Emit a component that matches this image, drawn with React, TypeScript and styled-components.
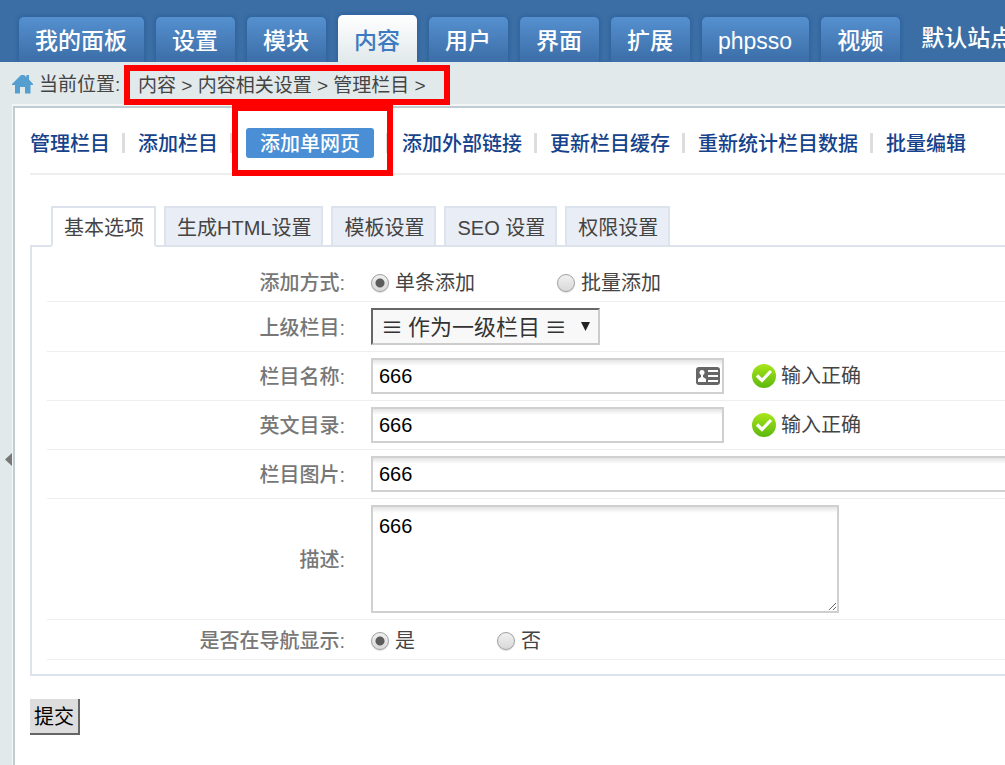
import React from 'react';
import styled, { createGlobalStyle, css } from 'styled-components';

const GlobalStyle = createGlobalStyle`
  *, *::before, *::after { box-sizing: border-box; }
  body {
    margin: 0;
    background: #fff;
    color: #444;
    font-family: "Liberation Sans", "Noto Sans CJK SC", sans-serif;
    font-size: 20px;
    line-height: 28px;
  }
  input, select, textarea, button { font: inherit; margin: 0; border-radius: 0; }
  a { text-decoration: none; }
`;

const Page = styled.div`
  display: flex;
  flex-direction: column;
  min-height: 100vh;
  overflow: hidden;
  background: #e1e9eb;
`;

const Header = styled.header`
  display: flex;
  align-items: flex-end;
  height: 62px;
  padding-left: 19px;
  background: #3a6ea5;
  white-space: nowrap;
`;

const MainNav = styled.nav`
  display: flex;
  align-items: flex-end;
  gap: 12px;
`;

const NavTab = styled.a<{ $active?: boolean }>`
  flex: none;
  height: 45px;
  padding: 0 17px 0 16px;
  border-radius: 5px 5px 0 0;
  background: linear-gradient(#5590cf, #3e71ab 90%);
  box-shadow: 0 0 4px 1px #2f619b;
  clip-path: inset(-4px -4px 0 -4px);
  color: #fff;
  font-size: 23px;
  font-weight: 500;
  line-height: 48px;
  ${p => p.$active && css`
    height: 47px;
    background: linear-gradient(#fff, #e1e9eb);
    color: #3d7ac0;
    line-height: 52px;
  `}
`;

const SiteName = styled.a`
  flex: none;
  padding-left: 21px;
  color: #fff;
  font-size: 23px;
  font-weight: 500;
  line-height: 48px;
`;

const Crumbs = styled.div`
  display: flex;
  align-items: center;
  height: 42px;
  padding: 3px 0 0 12px;
  font-size: 19px;
  white-space: nowrap;
`;

const CrumbLabel = styled.span`
  width: 85px;
  margin-left: 6px;
`;

const CrumbPath = styled.span`
  position: relative;
  padding: 2px 24px 0 14px;
`;

const Mark = styled.span`
  position: absolute;
  inset: -5px 0;
  border: 6px solid #f00;
  pointer-events: none;
`;

const Body = styled.div`
  display: flex;
  flex: 1;
`;

const Gutter = styled.div`
  flex: none;
  display: flex;
  justify-content: flex-end;
  align-items: flex-start;
  width: 12px;
  padding-top: 349px;
`;

const Collapse = styled.button`
  display: flex;
  padding: 0;
  border: 0;
  background: none;
`;

const Content = styled.main`
  flex: 1;
  min-width: 0;
  border: solid #f4f6f6;
  border-width: 2px 0 0 1px;
`;

const Sheet = styled.div`
  height: 100%;
  padding-left: 15px;
  border: solid #bfcdd3;
  border-width: 2px 0 0 2px;
  background: #fff;
`;

const SubNav = styled.nav`
  display: flex;
  align-items: center;
  height: 67px;
  padding-top: 4px;
  border-bottom: 2px solid #eee;
  white-space: nowrap;
`;

const SubItem = styled.span`
  position: relative;
  flex: none;
  display: flex;
  align-items: center;
  &:not(:last-child)::after {
    content: "";
    width: 3px;
    height: 20px;
    margin: 0 13px 0 12px;
    background: #ddd;
  }
`;

const SubLink = styled.a<{ $active?: boolean }>`
  height: 30px;
  color: #15428b;
  font-weight: 500;
  line-height: 32px;
  ${p => p.$active && css`
    padding: 0 14px;
    border-radius: 3px;
    background: #4a8fd5;
    color: #fff;
  `}
`;

const SubMark = styled(Mark)`
  inset: -23px 9px -18px -14px;
`;

const TabList = styled.div`
  position: relative;
  display: flex;
  gap: 8px;
  margin: 31px 0 -2px;
  padding-left: 21px;
  white-space: nowrap;
`;

const Tab = styled.button<{ $active?: boolean }>`
  flex: none;
  height: 41px;
  padding: 3px 10px 0 11px;
  border: 2px solid #dce3ed;
  background: #e9edf5;
  color: #444;
  ${p => p.$active && css`
    border-bottom-color: #fff;
    background: #fff;
  `}
`;

const Fields = styled.div`
  padding: 15px 0 14px 15px;
  border: solid #dce3ed;
  border-width: 2px 0 2px 2px;
`;

const Row = styled.div<{ $h: number }>`
  display: flex;
  align-items: center;
  gap: 26px;
  min-height: ${p => p.$h}px;
  border-bottom: 1px solid #eee;
`;

const nameStyle = css`
  flex: none;
  width: 298px;
  padding-top: 2px;
  color: #777;
  font-weight: 500;
  text-align: right;
`;

const Name = styled.label`${nameStyle}`;
const GroupName = styled.span`${nameStyle}`;

const Choices = styled.div`
  display: flex;
  gap: 82px;
  padding-top: 2px;
`;

const Choice = styled.label`
  display: flex;
  align-items: center;
  gap: 6px;
`;

const Radio = styled.input`
  appearance: none;
  width: 18px;
  height: 18px;
  border: 1px solid #a0a0a0;
  border-radius: 50%;
  background: linear-gradient(#f0f0f0, #d9d9d9);
  box-shadow: 0 1px 1px #0002;
  &:checked {
    background: radial-gradient(circle, #5c5c5c 4px, transparent 5px), linear-gradient(#f0f0f0, #d9d9d9);
  }
`;

const SelectBox = styled.span`
  position: relative;
  width: 229px;
`;

const Select = styled.select`
  appearance: none;
  display: block;
  width: 100%;
  height: 37px;
  padding: 0 0 4px 8px;
  border: 2px solid;
  border-color: #666 #ccc #ccc #666;
  background: #f8f8f8;
  color: #333;
  font-family: "Noto Sans CJK SC", sans-serif;
  font-size: 22px;
`;

const SelectArrow = styled.svg`
  position: absolute;
  right: 10px;
  top: 14px;
  pointer-events: none;
`;

const fieldStyle = css`
  border: 2px solid #d0d0d0;
  background: linear-gradient(#e4e4e4, #fff 6px);
  color: #000;
`;

const InputBox = styled.span`
  position: relative;
  width: 353px;
`;

const Input = styled.input<{ $wide?: boolean }>`
  ${fieldStyle}
  display: block;
  width: 100%;
  height: 36px;
  padding: 0 6px;
  ${p => p.$wide && css`
    flex: 1;
    min-width: 0;
    border-right: 0;
  `}
`;

const CardIcon = styled.svg`
  position: absolute;
  right: 4px;
  top: 9px;
`;

const TextArea = styled.textarea`
  ${fieldStyle}
  display: block;
  width: 468px;
  height: 108px;
  padding: 5px 6px;
  resize: both;
`;

const Valid = styled.span`
  display: flex;
  align-items: center;
  gap: 5px;
  margin-left: 2px;
`;

const Submit = styled.button`
  height: 36px;
  margin-top: 23px;
  padding: 2px 4px 0 4px;
  border: solid #666;
  border-width: 0 2px 2px 0;
  background: #ddd;
  color: #000;
`;

const Home = () => (
  <svg width="21" height="19" viewBox="0 0 21 19" aria-hidden="true">
    <path d="M9 0h3l2.500 2V0H17v4.500L21 9v1h-2.500v8.500H13V12H8v6.500H3V10H0V9z" fill="#559fd0" />
  </svg>
);

const Check = () => (
  <svg width="24" height="24" viewBox="0 0 24 24" aria-hidden="true">
    <defs>
      <linearGradient id="ok" x1="0" y1="0" x2="0" y2="1">
        <stop offset="0" stopColor="#a8e61a" />
        <stop offset="1" stopColor="#5cb80e" />
      </linearGradient>
    </defs>
    <circle cx="12" cy="12" r="12" fill="url(#ok)" />
    <path d="M5 11.500l5 5L19 7" fill="none" stroke="#fff" strokeWidth="3.200" />
  </svg>
);

const navItems = ['我的面板', '设置', '模块', '内容', '用户', '界面', '扩展', 'phpsso', '视频'];
const subItems = ['管理栏目', '添加栏目', '添加单网页', '添加外部链接', '更新栏目缓存', '重新统计栏目数据', '批量编辑'];
const tabs = ['基本选项', '生成HTML设置', '模板设置', 'SEO 设置', '权限设置'];

const RadioRow = ({ name, title, options }: { name: string; title: string; options: string[] }) => (
  <Row $h={40} role="radiogroup" aria-labelledby={`${name}-title`}>
    <GroupName id={`${name}-title`}>{title}:</GroupName>
    <Choices>
      {options.map((o, i) => (
        <Choice key={o}>
          <Radio type="radio" name={name} defaultChecked={i === 0} />
          {o}
        </Choice>
      ))}
    </Choices>
  </Row>
);

export default function App() {
  return (
    <Page>
      <GlobalStyle />
      <Header>
        <MainNav>
          {navItems.map(n => (
            <NavTab key={n} href="#" $active={n === '内容'}>{n}</NavTab>
          ))}
        </MainNav>
        <SiteName href="#">默认站点</SiteName>
      </Header>
      <Crumbs>
        <Home />
        <CrumbLabel>当前位置:</CrumbLabel>
        <CrumbPath>
          内容 &gt; 内容相关设置 &gt; 管理栏目 &gt;
          <Mark />
        </CrumbPath>
      </Crumbs>
      <Body>
        <Gutter>
          <Collapse aria-label="收起">
            <svg width="7" height="13" viewBox="0 0 7 13"><path d="M7 0v13L0 6.500z" fill="#777" /></svg>
          </Collapse>
        </Gutter>
        <Content>
          <Sheet>
            <SubNav>
              {subItems.map(s => (
                <SubItem key={s}>
                  <SubLink href="#" $active={s === '添加单网页'}>{s}</SubLink>
                  {s === '添加单网页' && <SubMark />}
                </SubItem>
              ))}
            </SubNav>
            <TabList role="tablist">
              {tabs.map((t, i) => (
                <Tab key={t} type="button" role="tab" aria-selected={i === 0} $active={i === 0}>{t}</Tab>
              ))}
            </TabList>
            <form onSubmit={e => e.preventDefault()}>
              <Fields>
                <RadioRow name="mode" title="添加方式" options={['单条添加', '批量添加']} />
                <Row $h={50}>
                  <Name htmlFor="parent">上级栏目:</Name>
                  <SelectBox>
                    <Select id="parent"><option>≡ 作为一级栏目 ≡</option></Select>
                    <SelectArrow width="9" height="9" viewBox="0 0 9 9"><path d="M0 0h9L4.500 9z" fill="#222" /></SelectArrow>
                  </SelectBox>
                </Row>
                <Row $h={49}>
                  <Name htmlFor="catname">栏目名称:</Name>
                  <InputBox>
                    <Input id="catname" defaultValue="666" />
                    <CardIcon width="24" height="18" viewBox="0 0 24 18">
                      <rect width="24" height="18" rx="3" fill="#666" />
                      <circle cx="6" cy="5.500" r="2.500" fill="#fff" />
                      <path d="M2 15v-3l3-2V7h2v3l3 2v3zM12 3h10v2H12zM12 8h10v2H12zM12 13h10v2H12z" fill="#fff" />
                    </CardIcon>
                  </InputBox>
                  <Valid><Check />输入正确</Valid>
                </Row>
                <Row $h={49}>
                  <Name htmlFor="catdir">英文目录:</Name>
                  <InputBox><Input id="catdir" defaultValue="666" /></InputBox>
                  <Valid><Check />输入正确</Valid>
                </Row>
                <Row $h={49}>
                  <Name htmlFor="image">栏目图片:</Name>
                  <Input id="image" defaultValue="666" $wide />
                </Row>
                <Row $h={121}>
                  <Name htmlFor="desc">描述:</Name>
                  <TextArea id="desc" defaultValue="666" />
                </Row>
                <RadioRow name="menu" title="是否在导航显示" options={['是', '否']} />
              </Fields>
              <Submit type="submit">提交</Submit>
            </form>
          </Sheet>
        </Content>
      </Body>
    </Page>
  );
}
